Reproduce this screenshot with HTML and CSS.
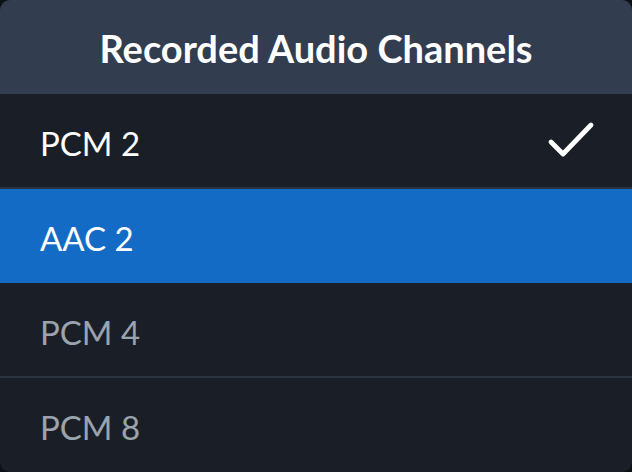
FILE: index.html
```html
<!DOCTYPE html>
<html>
<head>
  <link rel="stylesheet" href="styles.css">
</head>
<body>
  <div class="sheet">
    <div class="sheet-title">Recorded Audio Channels</div>
    <ul class="options">
      <li class="option selected">
        <span>PCM 2</span>
        <svg class="check" width="48" height="40" viewBox="0 0 48 40">
          <path d="M4 22 L16 34 L44 5" fill="none" stroke="#ffffff" stroke-width="4.8" stroke-linecap="round" stroke-linejoin="round"/>
        </svg>
      </li>
      <li class="option active"><span>AAC 2</span></li>
      <li class="option disabled"><span>PCM 4</span></li>
      <li class="option disabled"><span>PCM 8</span></li>
    </ul>
  </div>
</body>
</html>
```

FILE: styles.css
```css
/* Channel picker sheet */

body {
  margin: 0;
  background: #0d1015;
  font-family: "Lato", "Liberation Sans", sans-serif;
  color: #ffffff;
}

.sheet {
  width: 632px;
  height: 472px;
  border-radius: 10px;
  overflow: hidden;
  background: #1a1f27;
  display: flex;
  flex-direction: column;
}

.sheet-title {
  height: 94px;
  background: #323d4f;
  display: flex;
  align-items: center;
  justify-content: center;
  font-size: 38px;
  font-weight: bold;
  padding-top: 2px;
  box-sizing: border-box;
}

.options {
  list-style: none;
  margin: 0;
  padding: 0;
}

.option {
  height: 95px;
  padding: 4px 40px 0;
  box-sizing: border-box;
  display: flex;
  align-items: center;
  justify-content: space-between;
  font-size: 33px;
  border-bottom: 2px solid #2b333f;
}

.option:last-child {
  border-bottom: none;
  height: 94px;
}

.option.active {
  background: #136bc6;
  border-bottom: none;
  height: 94px;
}

.option.disabled {
  color: #9aa3ae;
}

.check {
  margin-right: -3px;
  margin-top: -6px;
}
```
